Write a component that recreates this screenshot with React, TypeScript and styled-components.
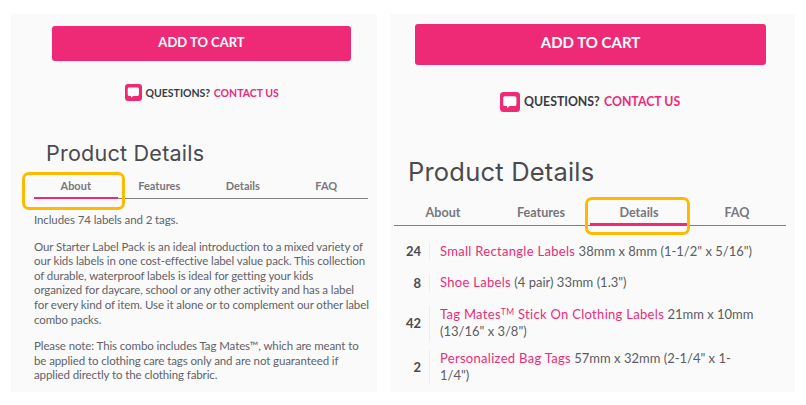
import React from "react";
import styled, { createGlobalStyle } from "styled-components";

const Global = createGlobalStyle`
  html, body { margin: 0; padding: 0; background: #fff; }
  body { font-family: "Lato", "Noto Sans", sans-serif; }
  #root { width: 806px; height: 405px; overflow: hidden; }
`;

const Page = styled.div`
  display: flex;
  gap: 13px;
  padding: 14px 0 0 11px;
`;

const Panel = styled.section<{ $large?: boolean }>`
  width: ${(p) => (p.$large ? 405 : 366)}px;
  height: 378px;
  flex: none;
  background: #fafafa;
  overflow: hidden;
  padding-top: ${(p) => (p.$large ? 10 : 12)}px;
  box-sizing: border-box;
  display: flex;
  flex-direction: column;
`;

const CartButton = styled.button<{ $large?: boolean }>`
  display: block;
  flex: none;
  margin-left: ${(p) => (p.$large ? 25 : 41)}px;
  width: ${(p) => (p.$large ? 351 : 299)}px;
  height: ${(p) => (p.$large ? 41 : 35)}px;
  padding: 0 0 ${(p) => (p.$large ? 5 : 4)}px;
  border: 0;
  border-radius: 3px;
  background: #ee2a77;
  color: #fff;
  font-family: inherit;
  font-weight: 700;
  font-size: ${(p) => (p.$large ? 15 : 13)}px;
`;

const Questions = styled.div<{ $large?: boolean }>`
  display: flex;
  align-items: center;
  flex: none;
  margin-top: ${(p) => (p.$large ? 26.5 : 23)}px;
  margin-left: ${(p) => (p.$large ? 110 : 114)}px;
  gap: ${(p) => (p.$large ? 4 : 3.5)}px;
  font-size: ${(p) => (p.$large ? 12.3 : 10.5)}px;
  font-weight: 700;
  color: #3a3a42;
  white-space: nowrap;
`;

const ContactLink = styled.span`
  color: #ee2a77;
  margin-left: 0.35em;
`;

const Title = styled.h2<{ $large?: boolean }>`
  margin: ${(p) => (p.$large ? "42px 0 0 18px" : "37px 0 0 35px")};
  font-family: "Inter", sans-serif;
  font-weight: 400;
  font-size: ${(p) => (p.$large ? 25.5 : 21.6)}px;
  line-height: ${(p) => (p.$large ? 36 : 30)}px;
  color: #4a4a4f;
  white-space: nowrap;
  letter-spacing: 0.2px;
`;

const TabBar = styled.div<{ $large?: boolean }>`
  position: relative;
  display: flex;
  flex: none;
  margin-left: ${(p) => (p.$large ? 4 : 23)}px;
  margin-top: 4px;
  width: ${(p) => (p.$large ? 392 : 334)}px;
  border-bottom: 1px solid #808080;
`;

const Tab = styled.div<{ $large?: boolean; $active?: boolean }>`
  position: relative;
  flex: 1;
  text-align: center;
  font-weight: 700;
  color: #77777c;
  font-size: ${(p) => (p.$large ? 12.6 : 11)}px;
  line-height: ${(p) => (p.$large ? 38 : 28)}px;
  height: ${(p) => (p.$large ? 31 : 26)}px;
  ${(p) =>
    p.$active
      ? `&::after { content: ""; position: absolute; left: 0; right: 0; bottom: -1px; height: ${
          p.$large ? 3 : 2
        }px; background: #ee2a77; }`
      : ""}
`;

const Highlight = styled.div<{ $large?: boolean }>`
  position: absolute;
  box-sizing: border-box;
  border: 3.5px solid #ffba00;
  border-radius: 7px;
  pointer-events: none;
  top: ${(p) => (p.$large ? 3 : 0)}px;
  left: ${(p) => (p.$large ? 191 : -12)}px;
  width: ${(p) => (p.$large ? 105 : 103)}px;
  height: 38px;
`;

const Body = styled.div`
  margin: 14px 0 0 23px;
  font-size: 11.5px;
  letter-spacing: -0.1px;
  line-height: 14.6px;
  color: #626268;
  white-space: nowrap;
`;

const Para = styled.p`
  margin: 0 0 12px;
`;

const Items = styled.div`
  margin: 17px 0 0 4px;
  display: flex;
  flex-direction: column;
`;

const Item = styled.div<{ $gap: number }>`
  display: flex;
  align-items: center;
  margin-bottom: ${(p) => p.$gap}px;
`;

const Count = styled.div`
  width: 27px;
  flex: none;
  margin-right: 8px;
  text-align: right;
  font-size: 13px;
  font-weight: 700;
  color: #4a4a4f;
`;

const ItemText = styled.div`
  border-left: 1px solid #ededed;
  padding-left: 10px;
  font-size: 13px;
  line-height: 17.5px;
  color: #5c5c62;
  white-space: nowrap;
`;

const PinkText = styled.span`
  color: #ee2a77;
  letter-spacing: 0.3px;
`;

const Tm = styled.sup`
  font-size: 8.5px;
  line-height: 0;
  vertical-align: 4px;
`;

const ChatIcon = ({ size }: { size: number }) => (
  <svg width={size} height={size} viewBox="0 0 20 20" aria-hidden="true">
    <rect width="20" height="20" rx="3.5" fill="#ee2a77" />
    <path
      d="M5.2 4.2h9.6a1.6 1.6 0 0 1 1.6 1.6v6.6a1.6 1.6 0 0 1-1.6 1.6h-5.2l-2.6 2.3v-2.3h-2.2a1.6 1.6 0 0 1-1.6-1.6V5.8a1.6 1.6 0 0 1 1.6-1.6z"
      fill="#fff"
    />
  </svg>
);

const tabs = ["About", "Features", "Details", "FAQ"];

const Tabs = ({ large, active }: { large?: boolean; active: string }) => (
  <TabBar $large={large}>
    {tabs.map((t) => (
      <Tab key={t} $large={large} $active={t === active}>
        {t}
      </Tab>
    ))}
    <Highlight $large={large} />
  </TabBar>
);

const Header = ({ large }: { large?: boolean }) => (
  <>
    <CartButton $large={large}>ADD TO CART</CartButton>
    <Questions $large={large}>
      <ChatIcon size={large ? 20 : 17} />
      <span>
        QUESTIONS?<ContactLink>CONTACT US</ContactLink>
      </span>
    </Questions>
    <Title $large={large}>Product Details</Title>
  </>
);

export default function App() {
  return (
    <>
      <Global />
      <Page>
        <Panel>
          <Header />
          <Tabs active="About" />
          <Body>
            <Para>Includes 74 labels and 2 tags.</Para>
            <Para>
              Our Starter Label Pack is an ideal introduction to a mixed variety of
              <br />
              our kids labels in one cost-effective label value pack. This collection
              <br />
              of durable, waterproof labels is ideal for getting your kids
              <br />
              organized for daycare, school or any other activity and has a label
              <br />
              for every kind of item. Use it alone or to complement our other label
              <br />
              combo packs.
            </Para>
            <Para>
              Please note: This combo includes Tag Mates™, which are meant to
              <br />
              be applied to clothing care tags only and are not guaranteed if
              <br />
              applied directly to the clothing fabric.
            </Para>
          </Body>
        </Panel>
        <Panel $large>
          <Header large />
          <Tabs large active="Details" />
          <Items>
            <Item $gap={14}>
              <Count>24</Count>
              <ItemText>
                <PinkText>Small Rectangle Labels</PinkText> 38mm x 8mm (1-1/2" x 5/16")
              </ItemText>
            </Item>
            <Item $gap={14}>
              <Count>8</Count>
              <ItemText>
                <PinkText>Shoe Labels</PinkText> (4 pair) 33mm (1.3")
              </ItemText>
            </Item>
            <Item $gap={9}>
              <Count>42</Count>
              <ItemText>
                <PinkText>
                  Tag Mates<Tm>TM</Tm> Stick On Clothing Labels
                </PinkText>{" "}
                21mm x 10mm
                <br />
                (13/16" x 3/8")
              </ItemText>
            </Item>
            <Item $gap={0}>
              <Count>2</Count>
              <ItemText>
                <PinkText>Personalized Bag Tags</PinkText> 57mm x 32mm (2-1/4" x 1-
                <br />
                1/4")
              </ItemText>
            </Item>
          </Items>
        </Panel>
      </Page>
    </>
  );
}
